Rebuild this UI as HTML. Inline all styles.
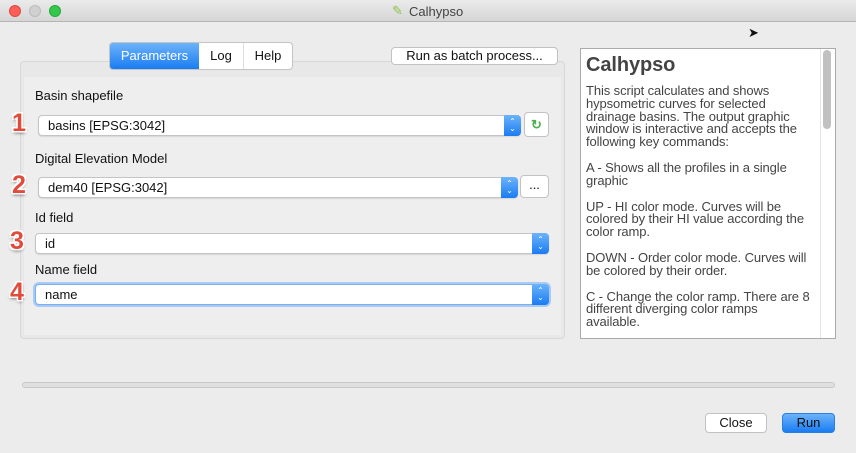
<!DOCTYPE html>
<html><head><style>
*{box-sizing:border-box;margin:0;padding:0}
body{width:856px;height:453px;background:#ececec;font-family:"Liberation Sans",sans-serif;font-size:13px;color:#111;position:relative;overflow:hidden}
.abs{position:absolute}
.title{left:0;top:0;width:856px;height:22px;background:linear-gradient(#ebebeb,#d6d6d6);border-bottom:1px solid #b5b5b5}
.dot{width:12px;height:12px;border-radius:50%;top:5px}
.combo{background:#fff;border:1px solid #c4c4c4;border-radius:4px;height:21px;padding-left:9px;line-height:19px;box-shadow:0 1px 1px rgba(0,0,0,.1)}
.arr{position:absolute;right:-1px;top:-1px;width:17px;height:21px;background:linear-gradient(#6cb3fa,#1a7cf2);border-radius:0 4px 4px 0;color:#fff;font-size:8px;line-height:7px;text-align:center;padding-top:3px}
.num{font-weight:bold;font-size:25px;color:#e24b3b;text-shadow:-1.5px -1.5px 0 #fff,1.5px -1.5px 0 #fff,-1.5px 1.5px 0 #fff,1.5px 1.5px 0 #fff,0 2px 3px rgba(0,0,0,.6)}
.btn{background:#fff;border:1px solid #c2c2c2;border-radius:4px;text-align:center}
p{margin-bottom:13px}
</style></head><body>
<div class="abs title"></div>
<div class="abs dot" style="left:9px;background:#fc5f57;border:1px solid #de4a41"></div>
<div class="abs dot" style="left:29px;background:#d0d0d0;border:1px solid #bbb"></div>
<div class="abs dot" style="left:49px;background:#34c84a;border:1px solid #27a93a"></div>
<div class="abs" style="left:392px;top:3px;color:#8bc34a;font-size:13px">✎</div>
<div class="abs" style="left:409px;top:4px;color:#444;font-size:13px">Calhypso</div>
<div class="abs" style="left:748px;top:25px;font-size:13px">➤</div>

<div class="abs" style="left:20px;top:61px;width:545px;height:278px;border:1px solid #d8d8d8;border-radius:4px;background:#e8e8e8"></div>
<div class="abs" style="left:24px;top:77px;width:537px;height:258px;background:#eeeeee"></div>

<div class="abs" style="left:109px;top:42px;width:184px;height:28px;border:1px solid #c4c4c4;border-radius:4px;background:#fff;display:flex;overflow:hidden">
<div style="width:89px;background:linear-gradient(#6cb3fa,#1a7cf2);color:#fff;text-align:center;line-height:26px">Parameters</div>
<div style="width:45px;text-align:center;line-height:26px;border-right:1px solid #ddd">Log</div>
<div style="flex:1;text-align:center;line-height:26px">Help</div></div>

<div class="abs btn" style="left:391px;top:47px;width:167px;height:18px;line-height:16px">Run as batch process...</div>

<div class="abs" style="left:35px;top:88px">Basin shapefile</div>
<div class="abs num" style="left:12px;top:109px">1</div>
<div class="abs combo" style="left:38px;top:115px;width:483px">basins [EPSG:3042]<div class="arr">⌃<br>⌄</div></div>
<div class="abs btn" style="left:524px;top:112px;width:25px;height:25px;color:#4caf50;line-height:23px;font-weight:bold">↻</div>

<div class="abs" style="left:35px;top:151px">Digital Elevation Model</div>
<div class="abs num" style="left:12px;top:171px">2</div>
<div class="abs combo" style="left:38px;top:177px;width:480px">dem40 [EPSG:3042]<div class="arr">⌃<br>⌄</div></div>
<div class="abs btn" style="left:520px;top:175px;width:29px;height:23px;line-height:18px">...</div>

<div class="abs" style="left:35px;top:210px">Id field</div>
<div class="abs num" style="left:10px;top:227px">3</div>
<div class="abs combo" style="left:35px;top:233px;width:514px">id<div class="arr">⌃<br>⌄</div></div>

<div class="abs" style="left:35px;top:262px">Name field</div>
<div class="abs num" style="left:10px;top:278px">4</div>
<div class="abs combo" style="left:35px;top:284px;width:514px;border-color:#7aaef0;box-shadow:0 0 0 2px #a8cbf5">name<div class="arr">⌃<br>⌄</div></div>

<div class="abs" style="left:580px;top:48px;width:256px;height:291px;background:#fff;border:1px solid #aaa;padding:3px 22px 0 5px;color:#444;font-size:13px;letter-spacing:-0.1px;line-height:12.8px;overflow:hidden">
<div style="font-size:20px;font-weight:bold;line-height:24px;margin:1px 0 8px">Calhypso</div>
<p>This script calculates and shows hypsometric curves for selected drainage basins. The output graphic window is interactive and accepts the following key commands:</p>
<p>A - Shows all the profiles in a single graphic</p>
<p>UP - HI color mode. Curves will be colored by their HI value according the color ramp.</p>
<p>DOWN - Order color mode. Curves will be colored by their order.</p>
<p>C - Change the color ramp. There are 8 different diverging color ramps available.</p>
</div>
<div class="abs" style="left:820px;top:49px;width:1px;height:289px;background:#e5e5e5"></div>
<div class="abs" style="left:823px;top:50px;width:8px;height:79px;background:#c1c1c1;border-radius:4px"></div>

<div class="abs" style="left:22px;top:382px;width:813px;height:6px;border:1px solid #c8c8c8;border-radius:3px;background:#e0e0e0"></div>

<div class="abs btn" style="left:705px;top:413px;width:62px;height:20px;line-height:18px">Close</div>
<div class="abs" style="left:782px;top:413px;width:53px;height:20px;line-height:18px;text-align:center;border-radius:4px;background:linear-gradient(#6cb3fa,#1a7cf2);border:1px solid #2a7ee8">Run</div>
</body></html>
